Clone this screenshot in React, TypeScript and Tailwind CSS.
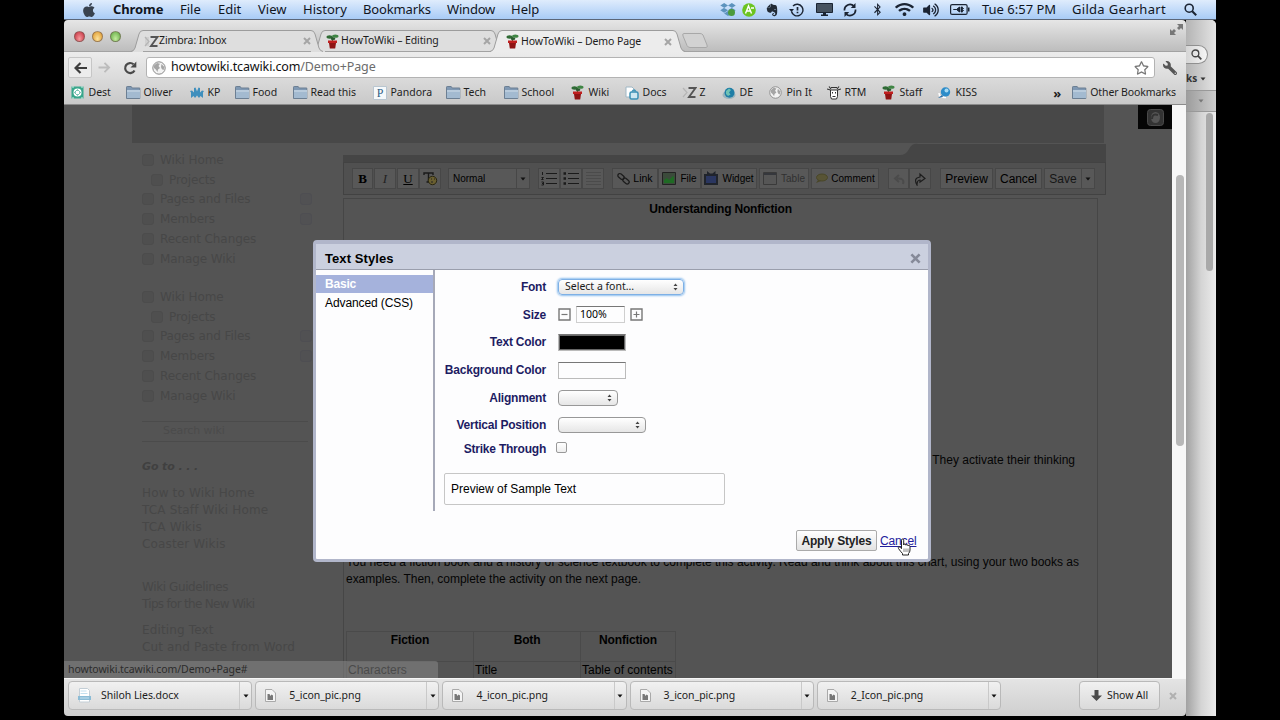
import React from "react";
import {
  FaApple,
  FaBluetoothB,
  FaDropbox,
  FaEvernote,
  FaRegStar,
  FaVolumeUp,
  FaWifi,
  FaWrench,
} from "react-icons/fa";
import { clsx } from "clsx";

const UI_FONT = "font-['Noto_Sans',sans-serif]";
const PAGE_FONT = "font-['Liberation_Sans',sans-serif]";

/* ---------- icons ---------- */

const FolderIcon = () => (
  <svg width="15" height="13" viewBox="0 0 15 13">
    <path d="M.5 2V1.2Q.5.5 1.2.5h4l1 1.5h7.6v10.5H.5z" fill="#7f98b3" stroke="#6c7f93" />
    <path d="M1 4h13v8H1z" fill="#a3bad0" />
    <path d="M1 4h13v2H1z" fill="#b9cbdc" />
  </svg>
);

const PlantIcon = () => (
  <svg width="13" height="15" viewBox="0 0 13 15">
    <path d="M6.5 8V3" stroke="#3d6b2c" strokeWidth="1.2" />
    <ellipse cx="3.5" cy="3" rx="3" ry="1.7" fill="#2f6b35" />
    <ellipse cx="9.3" cy="2.2" rx="3.2" ry="1.6" fill="#3f8544" />
    <ellipse cx="7" cy="4.8" rx="2.4" ry="1.2" fill="#2b5a30" />
    <path d="M2 6.5h9V9H2z" fill="#c01f1f" />
    <path d="M3 9h7l-.8 5.5H3.800z" fill="#8f1414" />
  </svg>
);

const ZIcon = () => (
  <svg width="15" height="13" viewBox="0 0 15 13">
    <path d="M1 2h4v9H1z" fill="#d0d0d0" />
    <path d="M1 2l4 4.500-4 4.500" fill="none" stroke="#b5b5b5" strokeWidth="1.200" />
    <path d="M6.500 2h7L7 11h6.500" fill="none" stroke="#555" strokeWidth="1.900" />
  </svg>
);

const GlobeIcon = ({ size = 14 }: { size?: number }) => (
  <svg width={size} height={size} viewBox="0 0 14 14">
    <circle cx="7" cy="7" r="6.200" fill="#f3f3f3" stroke="#8a8a8a" />
    <path d="M2 4.500L5 2l3 .800L6.500 5 8 7 6 8.500 5.500 11 3.800 8.500 2 7z" fill="#a5a5a5" />
    <path d="M9.500 3l2.800 3-.8 3.200L9.800 8 9 6z" fill="#a5a5a5" />
  </svg>
);

const DestIcon = () => (
  <svg width="13" height="13" viewBox="0 0 13 13">
    <path d="M.5.500h12v12H.5z" fill="#39a78c" />
    <circle cx="6.500" cy="6.500" r="4" fill="#fff" />
    <path d="M6.500 3.200l3.300 3.300-3.300 3.300-3.300-3.300z" fill="#2a9d84" />
    <circle cx="6.500" cy="6.500" r="2" fill="#fff" />
    <path d="M1 1h2M10 1h2M1 12h2M10 12h2" stroke="#c9efe5" />
  </svg>
);

const KpIcon = () => (
  <svg width="14" height="13" viewBox="0 0 14 13">
    <path d="M1 12V6.500L0 5l2-.500 2 2V2l1.500-.500L7 5.500 8.500 1.500 10 2v4.500l2-2 2 .500-1 1.500V12l-2.500-2L9 12 7 9.500 5 12l-1.500-2z" fill="#3f8fbd" />
  </svg>
);

const PandoraIcon = () => (
  <svg width="14" height="14" viewBox="0 0 14 14">
    <path d="M.5.500h13v13H.5z" fill="#f6f9fb" stroke="#b9c6d0" />
    <text x="7" y="11" textAnchor="middle" fontSize="12" fontFamily="Liberation Serif" fill="#2f5f86">P</text>
  </svg>
);

const DocsIcon = () => (
  <svg width="14" height="14" viewBox="0 0 14 14">
    <path d="M1 1h6l2 2v8H1z" fill="#fff" stroke="#9fb7c5" />
    <rect x="5" y="6" width="8" height="7" rx="1.500" fill="#cde7f1" stroke="#3a90b5" strokeWidth="1.500" />
    <path d="M7 5.500Q9 2.500 11 5.500" fill="none" stroke="#3a90b5" strokeWidth="1.300" />
  </svg>
);

const EarthIcon = () => (
  <svg width="14" height="14" viewBox="0 0 14 14">
    <ellipse cx="7" cy="9" rx="6.500" ry="4" fill="#9bb4bd" />
    <circle cx="7.500" cy="6.800" r="5" fill="#1f7ea6" />
    <path d="M4 5l3-2.500 2 1.500-2 2.500 1.500 2L6 10 4 8z" fill="#6fc2b4" />
  </svg>
);

const CowIcon = () => (
  <svg width="14" height="15" viewBox="0 0 14 15">
    <path d="M3.500 5h7v6.500l-1 2.500h-5l-1-2.500z" fill="#fff" stroke="#333" />
    <path d="M0 4l3.500 1M14 4l-3.500 1M2 1.500l2 2.500M12 1.500L10 4M4 2.500h6" stroke="#333" strokeWidth="1.200" />
    <path d="M5.500 7v1.500M8.500 7v1.500M5.500 11.500h3" stroke="#333" />
  </svg>
);

const KissIcon = () => (
  <svg width="13" height="13" viewBox="0 0 13 13">
    <circle cx="7.500" cy="6" r="4.700" fill="#2d8cc9" />
    <circle cx="8.500" cy="4.500" r="2" fill="#a6daf3" />
    <path d="M1 7q0 5 7 4.500" fill="none" stroke="#fff" strokeWidth="1.500" />
    <path d="M0 12l4-3 1 2z" fill="#2a6fa8" />
  </svg>
);

const MagnifierIcon = ({ size = 13, color = "#1b2433" }: { size?: number; color?: string }) => (
  <svg width={size} height={size} viewBox="0 0 13 13" fill="none" stroke={color}>
    <circle cx="5.200" cy="5.200" r="4" strokeWidth="1.600" />
    <path d="M8.200 8.200l4 4" strokeWidth="2" />
  </svg>
);

const CloseIcon = ({ size = 8, color = "#a5a5a5", stroke = 2 }: { size?: number; color?: string; stroke?: number }) => (
  <svg width={size} height={size} viewBox="0 0 8 8" stroke={color} strokeWidth={stroke}>
    <path d="M1 1l6 6M7 1L1 7" />
  </svg>
);

const Caret = ({ color = "#111" }: { color?: string }) => (
  <svg width="6" height="4" viewBox="0 0 6 4">
    <path d="M.5.500h5L3 3.500z" fill={color} />
  </svg>
);

const UpDown = () => (
  <svg width="5" height="8" viewBox="0 0 5 8" fill="#444">
    <path d="M2.500.500L4.500 3h-4zM2.500 7.500L.5 5h4z" />
  </svg>
);

/* ---------- mac menu bar ---------- */

const menus = [
  { label: "Chrome", className: "w-[67px] font-bold tracking-[-0.1px]" },
  { label: "File", className: "w-[38px]" },
  { label: "Edit", className: "w-[40px]" },
  { label: "View", className: "w-[45px]" },
  { label: "History", className: "w-[60px]" },
  { label: "Bookmarks", className: "w-[84px] tracking-[-0.150px]" },
  { label: "Window", className: "w-[64px] tracking-[-0.200px]" },
  { label: "Help", className: "w-[50px]" },
];

const MenuBar = () => (
  <div
    className={clsx(
      "flex h-[20px] shrink-0 items-center border-b border-[#5b6678] bg-linear-to-b from-[#dfecfc] to-[#a8cbf6] pl-[18px] text-[13px] text-[#10151e]",
      UI_FONT
    )}
  >
    <span className="w-[31px]">
      <FaApple className="h-[16px] w-[14px] text-[#38424f]" />
    </span>
    {menus.map((m) => (
      <span key={m.label} className={clsx("shrink-0 whitespace-nowrap", m.className)}>
        {m.label}
      </span>
    ))}
    <div className="ml-auto flex items-center">
      <span className="relative w-[22px]">
        <FaDropbox className="h-[15px] w-[16px] text-[#5d93bd]" />
        <span className="absolute top-[7px] left-[8px] size-[7px] rounded-full bg-[#4c9b3d]" />
      </span>
      <span className="w-[23px]">
        <svg width="14" height="14" viewBox="0 0 14 14">
          <circle cx="7" cy="7" r="6.800" fill="#6cc421" />
          <path d="M3.500 10.500L6.500 3l3 7.500M4.500 8h4M9 5h3" stroke="#fff" strokeWidth="1.400" fill="none" />
        </svg>
      </span>
      <span className="w-[24px]">
        <FaEvernote className="h-[14px] w-[14px] text-[#222b36]" />
      </span>
      <span className="w-[27px]">
        <svg width="15" height="14" viewBox="0 0 15 14" fill="none" stroke="#1b2433" strokeWidth="1.400">
          <path d="M2.500 8.500A5.800 5.800 0 1 0 4 3" />
          <path d="M8.500 4v3.500M8.500 8.800v1.400" strokeWidth="1.700" />
          <path d="M0 6h5L2.500 9z" fill="#1b2433" stroke="none" />
        </svg>
      </span>
      <span className="w-[27px]">
        <svg width="17" height="13" viewBox="0 0 17 13">
          <path d="M.5.500h16v9H.5z" fill="#46525f" stroke="#1b2433" />
          <path d="M7 10h3v1.500h2V13H5v-1.500h2z" fill="#1b2433" />
        </svg>
      </span>
      <span className="w-[30px]">
        <svg width="14" height="14" viewBox="0 0 14 14" fill="none" stroke="#1b2433" strokeWidth="1.700">
          <path d="M1.500 7.500A5.500 5.500 0 0 1 11 3.200M12.500 6.500A5.500 5.500 0 0 1 3 10.800" />
          <path d="M12.500 0v5H7.800zM1.500 14V9h4.700z" fill="#1b2433" stroke="none" />
        </svg>
      </span>
      <span className="w-[22px]">
        <FaBluetoothB className="h-[13px] w-[9px] text-[#1b2433]" />
      </span>
      <span className="w-[28px]">
        <FaWifi className="h-[15px] w-[19px] text-[#1b2433]" />
      </span>
      <span className="w-[27px]">
        <FaVolumeUp className="h-[14px] w-[16px] text-[#1b2433]" />
      </span>
      <span className="w-[32px]">
        <svg width="20" height="11" viewBox="0 0 20 11">
          <rect x=".6" y=".6" width="16.500" height="9.800" rx="1.500" fill="none" stroke="#1b2433" strokeWidth="1.200" />
          <path d="M18 3.500h1.500v4H18z" fill="#1b2433" />
          <path d="M3.500 5.500h3l3-2.500v5l-3-2.500z" fill="#1b2433" stroke="#1b2433" />
          <path d="M11 3h1.500v5H11zM12.500 4.500H14M12.500 6.500H14" fill="#1b2433" stroke="#1b2433" strokeWidth=".8" />
        </svg>
      </span>
      <span className="w-[90px] whitespace-nowrap">Tue 6:57 PM</span>
      <span className="w-[112px] tracking-[0.300px] whitespace-nowrap">Gilda Gearhart</span>
      <span className="w-[32px]">
        <MagnifierIcon />
      </span>
    </div>
  </div>
);

/* ---------- chrome window ---------- */

type TabProps = {
  icon: React.ReactNode;
  title: string;
  className: string;
  bodyClass?: string;
  active?: boolean;
};

const Tab = ({ icon, title, className, bodyClass, active }: TabProps) => {
  const fill = active ? "#ececec" : "#dedede";
  return (
    <div className={clsx("relative flex shrink-0", active ? "h-[22px]" : "h-[21px]", className)}>
      <svg width="12" height="22" viewBox="0 0 12 22" className="shrink-0">
        <path d="M0 22Q3 21 4 18L8 4Q9 .500 12 .500V22z" fill={fill} />
        <path d="M0 21.500Q3 21 4 18L8 4Q9 .500 12 .500" fill="none" stroke="#9c9c9c" />
      </svg>
      <div
        className={clsx(
          "flex min-w-0 flex-1 items-center border-t border-[#9c9c9c]",
          active ? "bg-[#ececec]" : "bg-[#dedede]",
          bodyClass
        )}
      >
        <span className="flex w-[15px] shrink-0">{icon}</span>
        <span className="flex-1 text-[10.500px] tracking-[-0.100px] whitespace-nowrap text-[#1c1c1c]">{title}</span>
        <CloseIcon />
      </div>
      <svg width="12" height="22" viewBox="0 0 12 22" className="shrink-0">
        <path d="M12 22Q9 21 8 18L4 4Q3 .500 0 .500V22z" fill={fill} />
        <path d="M12 21.500Q9 21 8 18L4 4Q3 .500 0 .500" fill="none" stroke="#9c9c9c" />
      </svg>
    </div>
  );
};

const Light = ({ className }: { className: string }) => (
  <span className={clsx("mr-[7px] size-[11px] rounded-full border border-[#6e5a52]/60", className)} />
);

const TabStrip = () => (
  <div
    className={clsx(
      "flex h-[32px] shrink-0 items-start border-b border-[#a2a2a2] bg-linear-to-b from-[#e6e6e6] to-[#bdbdbd] pl-[10px]",
      UI_FONT
    )}
  >
    <div className="flex w-[57px] pt-[11px]">
      <Light className="bg-radial-[at_50%_75%] from-[#f79a9c] to-[#c22b3c]" />
      <Light className="bg-radial-[at_50%_75%] from-[#fde29a] to-[#dd9526]" />
      <Light className="bg-radial-[at_50%_75%] from-[#c3ec9d] to-[#5da83f]" />
    </div>
    <div className="flex pt-[10px]">
      <Tab icon={<ZIcon />} title="Zimbra: Inbox" className="z-10 w-[192px]" bodyClass="pl-[1px]" />
      <Tab icon={<PlantIcon />} title="HowToWiki – Editing" className="-ml-[10px] w-[190px]" bodyClass="pl-[1px]" />
      <Tab icon={<PlantIcon />} title="HowToWiki – Demo Page" className="z-10 -ml-[13px] w-[195px]" bodyClass="pl-[4px] pr-[1px]" active />
    </div>
    <svg width="26" height="16" viewBox="0 0 26 16" className="mt-[13px] -ml-[3px]">
      <path d="M2 .500h16Q20 .500 21 2l4 10q1 2.500-1 2.500H8q-2 0-3-2L1 3Q0 .500 2 .500z" fill="#d2d2d2" stroke="#a8a8a8" />
    </svg>
    <svg width="13" height="13" viewBox="0 0 13 13" className="mt-[3px] mr-[3px] ml-auto" fill="#777">
      <path d="M7 1h6v6l-2-2-2 2-2-2 2-2zM0 6l2 2 2-2 2 2-2 2 2 2H0z" />
    </svg>
  </div>
);

const Toolbar = () => (
  <div className={clsx("flex h-[28px] shrink-0 items-center bg-linear-to-b from-[#ececec] to-[#dadada] pt-[3px] pl-[4px]", UI_FONT)}>
    <div className="flex h-[21px] w-[24px] items-center justify-center rounded-[2px] border border-[#c6c6c6] bg-[#ececec]">
      <svg width="13" height="12" viewBox="0 0 13 12" fill="none" stroke="#3e3e3e" strokeWidth="2.200">
        <path d="M6.500 1L1.500 6l5 5M2 6h11" />
      </svg>
    </div>
    <svg width="13" height="11" viewBox="0 0 13 12" fill="none" stroke="#bcbcbc" strokeWidth="2" className="ml-[6px]">
      <path d="M6.500 1l5 5-5 5M11 6H0" />
    </svg>
    <svg width="14" height="14" viewBox="0 0 14 14" fill="none" stroke="#4a4a4a" strokeWidth="2.200" className="ml-[12px]">
      <path d="M11.500 9.500A5 5 0 1 1 10.500 3.300" />
      <path d="M13.300.500v6H7.500z" fill="#4a4a4a" stroke="none" />
    </svg>
    <div className="ml-[9px] flex h-[21px] w-[1009px] items-center rounded-[3px] border border-[#b3b3b3] bg-white pr-[5px] pl-[5px]">
      <GlobeIcon />
      <span className="ml-[5px] text-[12.500px] tracking-[-0.130px] whitespace-nowrap text-[#6c6c6c]">
        <span className="text-[#111]">howtowiki.tcawiki.com</span>/Demo+Page
      </span>
      <FaRegStar className="ml-auto h-[14px] w-[15px] text-[#777]" />
    </div>
    <FaWrench className="ml-[8px] size-[14px] -scale-x-100 text-[#565656]" />
  </div>
);

const bookmarks = [
  { label: "Dest", icon: <DestIcon />, className: "w-[55px]" },
  { label: "Oliver", icon: <FolderIcon />, className: "w-[64px]" },
  { label: "KP", icon: <KpIcon />, className: "w-[45px]" },
  { label: "Food", icon: <FolderIcon />, className: "w-[58px]" },
  { label: "Read this", icon: <FolderIcon />, className: "w-[80px]" },
  { label: "Pandora", icon: <PandoraIcon />, className: "w-[73px]" },
  { label: "Tech", icon: <FolderIcon />, className: "w-[58px]" },
  { label: "School", icon: <FolderIcon />, className: "w-[67px]" },
  { label: "Wiki", icon: <PlantIcon />, className: "w-[54px]" },
  { label: "Docs", icon: <DocsIcon />, className: "w-[57px]" },
  { label: "Z", icon: <ZIcon />, className: "w-[40px]" },
  { label: "DE", icon: <EarthIcon />, className: "w-[47px]" },
  { label: "Pin It", icon: <GlobeIcon size={13} />, className: "w-[58px]" },
  { label: "RTM", icon: <CowIcon />, className: "w-[55px]" },
  { label: "Staff", icon: <PlantIcon />, className: "w-[56px]" },
  { label: "KISS", icon: <KissIcon />, className: "w-[60px]" },
];

const BookmarksBar = () => (
  <div
    className={clsx(
      "flex h-[25px] shrink-0 items-center border-b border-[#8b8b8b] bg-linear-to-b from-[#d9d9d9] to-[#c9c9c9] pt-[1px] pl-[7px] text-[10.500px] text-[#1e1e1e]",
      UI_FONT
    )}
  >
    {bookmarks.map((b) => (
      <div key={b.label} className={clsx("flex shrink-0 items-center whitespace-nowrap", b.className)}>
        <span className="flex w-[17.500px] shrink-0">{b.icon}</span>
        {b.label}
      </div>
    ))}
    <div className="ml-auto flex items-center pr-[10px] tracking-[-0.100px] whitespace-nowrap">
      <span className="w-[19px] text-[13px] leading-[14px] font-bold">»</span>
      <span className="flex w-[18px]">
        <FolderIcon />
      </span>
      Other Bookmarks
    </div>
  </div>
);

/* ---------- dimmed wiki page ---------- */

const wikiLinks = [
  { label: "Wiki Home", className: "" },
  { label: "Projects", className: "pl-[9px]" },
  { label: "Pages and Files", className: "", badge: true },
  { label: "Members", className: "", badge: true },
  { label: "Recent Changes", className: "" },
  { label: "Manage Wiki", className: "" },
];

const WikiNav = () => (
  <div className="pr-[21px]">
    {wikiLinks.map((l) => (
      <div key={l.label} className={clsx("flex h-[19.800px] items-center", l.className)}>
        <span className="mr-[6px] size-[12px] rounded-[3px] border border-[#4c4c4c] bg-[#4f4f4f]" />
        {l.label}
        {l.badge && <span className="ml-auto size-[12px] rounded-[3px] border border-[#4e4e52] bg-[#515153]" />}
      </div>
    ))}
  </div>
);

const WikiSidebar = () => (
  <div className="w-[201px] shrink-0 pl-[10px] font-['DejaVu_Sans',sans-serif] text-[12px] tracking-[-0.1px] whitespace-nowrap text-[#474747]">
    <div className="h-[137px] pt-[7px]">
      <WikiNav />
    </div>
    <div className="pt-[7px]">
      <WikiNav />
    </div>
    <div className="mt-[15px] mr-[25px] flex h-[21px] items-center border-y border-[#4b4b4b] pl-[21px] text-[11px] text-[#4b4b4b]">
      Search wiki
    </div>
    <div className="mt-[15px] h-[20px] text-[11px] leading-[20px] font-bold text-[#404040] italic">Go to . . .</div>
    <div className="mt-[8px] leading-[17px] tracking-[0.150px]">
      <div>How to Wiki Home</div>
      <div>TCA Staff Wiki Home</div>
      <div>TCA Wikis</div>
      <div>Coaster Wikis</div>
      <div className="mt-[26px] tracking-[-0.400px]">Wiki Guidelines</div>
      <div className="tracking-[-0.700px]">Tips for the New Wiki</div>
      <div className="mt-[9px]">Editing Text</div>
      <div>Cut and Paste from Word</div>
    </div>
  </div>
);

const EditorButton = ({ className, children }: { className: string; children?: React.ReactNode }) => (
  <span
    className={clsx(
      "flex h-[21px] shrink-0 items-center justify-center border border-[#474747] bg-[#585858] whitespace-nowrap",
      className
    )}
  >
    {children}
  </span>
);

const ListIcon = ({ numbered }: { numbered?: boolean }) => (
  <svg width="16" height="15" viewBox="0 0 16 15" stroke="#1a1a1a">
    <path d="M5 2.500h11M5 7.500h11M5 12.500h11" />
    {numbered ? (
      <path d="M1.500 1v3M.5 6.500h2l-2 2h2M.5 11h2v3h-2M1 12.500h1" fill="none" />
    ) : (
      <path d="M.5 2.500h2.500M.5 7.500h2.500M.5 12.500h2.500" strokeWidth="2.400" />
    )}
  </svg>
);

const EditorToolbar = () => (
  <div className="flex h-[33px] items-center border border-[#424242] bg-[#505050] pl-[8px] text-[10px] text-black">
    <EditorButton className="w-[21px] font-['Liberation_Serif',serif] text-[13px] font-bold">B</EditorButton>
    <EditorButton className="ml-px w-[22px] font-['Liberation_Serif',serif] text-[13px] text-[#222] italic">I</EditorButton>
    <EditorButton className="ml-px w-[22px] font-['Liberation_Serif',serif] text-[13px] underline">U</EditorButton>
    <EditorButton className="w-[22px] border-[#333]">
      <svg width="15" height="15" viewBox="0 0 15 15">
        <path d="M1 4V2h9v2M5.500 2v9M3.500 11h4" fill="none" stroke="#1a1a1a" strokeWidth="1.400" />
        <circle cx="9.500" cy="9.500" r="4.200" fill="#6a5f30" stroke="#2a2712" />
        <path d="M8 8h1M11 8h1M8 11h2" stroke="#222" />
      </svg>
    </EditorButton>
    <EditorButton className="ml-[7px] w-[69px] justify-start! pl-[4px]">Normal</EditorButton>
    <EditorButton className="-ml-px w-[14px]">
      <Caret />
    </EditorButton>
    <EditorButton className="ml-[8px] w-[22px]">
      <ListIcon numbered />
    </EditorButton>
    <EditorButton className="w-[22px]">
      <ListIcon />
    </EditorButton>
    <EditorButton className="w-[22px]">
      <svg width="15" height="15" viewBox="0 0 15 15" stroke="#4b4b4b">
        <path d="M0 1.500h15M0 4.500h15M0 7.500h15M0 10.500h15M0 13.500h15" />
      </svg>
    </EditorButton>
    <EditorButton className="ml-[8px] w-[46px] gap-[2px] text-[10.500px]">
      <svg width="14" height="13" viewBox="0 0 13 13" fill="none" stroke="#1c1c1c" strokeWidth="1.300">
        <rect x="0" y="2.500" width="7" height="4" rx="2" transform="rotate(40 3.500 4.500)" />
        <rect x="5" y="7" width="7" height="4" rx="2" transform="rotate(40 8.500 9)" />
      </svg>
      Link
    </EditorButton>
    <EditorButton className="w-[43px] gap-[4px]">
      <svg width="14" height="13" viewBox="0 0 14 13">
        <path d="M.5.500h13v12H.5z" fill="#3b4a3b" stroke="#222" />
        <path d="M2 11V8l3-2 2 2 4-4 1 1v6z" fill="#1f6a24" />
      </svg>
      File
    </EditorButton>
    <EditorButton className="w-[56px] gap-[3px]">
      <svg width="15" height="15" viewBox="0 0 15 15">
        <rect x="0" y="3" width="14" height="11" fill="#20242c" />
        <rect x="2" y="5" width="10" height="7" fill="#2a3660" />
        <path d="M3 3V0l3 2.500h2.500L11.500 0v3z" fill="#20242c" />
      </svg>
      Widget
    </EditorButton>
    <EditorButton className="ml-[2px] w-[50px] gap-[4px] text-[#303030]">
      <svg width="14" height="13" viewBox="0 0 14 13">
        <path d="M.5.500h13v12H.5z" fill="#565656" stroke="#3a3a3a" />
        <path d="M1 1h12v2H1z" fill="#35373c" />
      </svg>
      Table
    </EditorButton>
    <EditorButton className="ml-[2px] w-[68px] gap-[3px]">
      <svg width="13" height="11" viewBox="0 0 13 11">
        <ellipse cx="7" cy="4.500" rx="5.500" ry="3.500" fill="#585435" stroke="#4a4729" />
        <path d="M3 7l-2 3 5-2z" fill="#4a4729" />
      </svg>
      Comment
    </EditorButton>
    <EditorButton className="ml-[9px] w-[21px]">
      <svg width="12" height="13" viewBox="0 0 12 13" fill="none" stroke="#4b4b4b" strokeWidth="2">
        <path d="M10 12q2-6-6-5.500M6 3L2 6.500 6 10" />
      </svg>
    </EditorButton>
    <EditorButton className="w-[22px]">
      <svg width="12" height="14" viewBox="0 0 12 14" fill="none" stroke="#1d1d1d" strokeWidth="1.200">
        <path d="M3 13Q-1 6 6 5V2l5 4.500L6 10V8Q3 8 3 13z" />
      </svg>
    </EditorButton>
    <EditorButton className="ml-[9px] w-[53px] text-[12px]">Preview</EditorButton>
    <EditorButton className="ml-[2px] w-[47px] text-[12px] tracking-[-0.1px]">Cancel</EditorButton>
    <EditorButton className="ml-[2px] w-[38px] text-[12px] text-[#161616]">Save</EditorButton>
    <EditorButton className="-ml-px w-[14px]">
      <Caret />
    </EditorButton>
  </div>
);

const CompareTable = () => (
  <div className="mt-[43px] ml-[2px] grid w-[330px] grid-cols-[127px_107px_95px] border-t border-l border-[#4a4a4a] text-[12px] text-black">
    {["Fiction", "Both", "Nonfiction"].map((h) => (
      <div key={h} className="h-[30px] border-r border-b border-[#4a4a4a] text-center leading-[17px] font-bold tracking-[-0.150px]">
        {h}
      </div>
    ))}
    {["Characters", "Title", "Table of contents"].map((c) => (
      <div key={c} className="h-[24px] border-r border-[#4a4a4a] pl-[1px] leading-[16px] whitespace-nowrap">
        {c}
      </div>
    ))}
  </div>
);

const Editor = () => (
  <div className="w-[763px] shrink-0">
    <div className="flex h-[12px] justify-end">
      <svg width="206" height="12" viewBox="0 0 206 12">
        <path d="M0 12Q6 12 9 6T18 1h188v11z" fill="#454545" />
      </svg>
    </div>
    <div className="h-[7px] bg-[#454545]" />
    <EditorToolbar />
    <div className="mt-[3px] h-[500px] w-[755px] border border-[#464646] text-[12px] text-[#050505]">
      <div className="h-[21px] text-center text-[12px] leading-[21px] font-bold tracking-[-0.200px] text-black">
        Understanding Nonfiction
      </div>
      <div className="mt-[230px] pr-[22px] text-right leading-[20px]">They activate their thinking</div>
      <div className="mt-[84px] pl-[2px] leading-[17px] tracking-[-0.030px] whitespace-nowrap">
        You need a fiction book and a history of science textbook to complete this activity. Read and think about this chart, using your two books as
        <br />
        examples. Then, complete the activity on the next page.
      </div>
      <CompareTable />
    </div>
  </div>
);

/* ---------- text styles dialog ---------- */

const Field = ({ label, className, children }: { label: string; className: string; children: React.ReactNode }) => (
  <div className={clsx("flex items-center", className)}>
    <span className="w-[111px] text-right font-bold tracking-[-0.220px] whitespace-nowrap text-[#1d1c63]">{label}</span>
    <div className="ml-[12px] flex items-center">{children}</div>
  </div>
);

const Select = ({ className, children }: { className: string; children?: React.ReactNode }) => (
  <div
    className={clsx(
      "flex h-[16px] items-center justify-between rounded-[4px] border bg-linear-to-b from-white to-[#e6e6e6] pr-[5px] pl-[6px] text-[10.500px] text-[#1a1a1a]",
      UI_FONT,
      className
    )}
  >
    <span>{children}</span>
    <UpDown />
  </div>
);

const StepButton = ({ plus }: { plus?: boolean }) => (
  <svg width="13" height="13" viewBox="0 0 13 13" fill="none" stroke="#777">
    <path d="M1 1h11v11H1z" strokeWidth="1.400" />
    <path d={plus ? "M3.500 6.500h6M6.500 3.500v6" : "M3.500 6.500h6"} strokeWidth="1.200" />
  </svg>
);

const HandCursor = () => (
  <svg width="15" height="18" viewBox="0 0 15 18" className="absolute top-[6px] left-[17px]">
    <path
      d="M4.500 10V2.200Q4.500 1 5.500 1t1.200 1.200V7q0-1 1-1t1.200 1.200Q9 6.500 10 6.600t1.100 1.300q.2-.6 1-.5.900.1.900 1.300V12q0 2-1.500 3.500V17h-6v-1.500Q3.500 13.500 1.500 10.500.700 9 1.800 8.700q1-.2 2.700 2z"
      fill="#fff"
      stroke="#222"
    />
    <path d="M7 10.500v3.500M9 10.500v3.500M11 10.500v3.500" stroke="#666" strokeWidth=".8" />
  </svg>
);

const TextStylesDialog = () => (
  <div
    className={clsx(
      "absolute top-[135px] left-[249px] flex h-[322px] w-[618px] flex-col rounded-[4px] border-x-3 border-t-4 border-b-3 border-[#b1b6ca] bg-[#fdfdfe] text-[12px] text-black",
      PAGE_FONT
    )}
  >
    <div className="flex h-[26px] items-center justify-between border-b border-[#9a9eac] bg-[#cbd0df] pt-[4px] pr-[7px] pl-[9px]">
      <span className="text-[13px] font-bold tracking-[0.080px]">Text Styles</span>
      <CloseIcon size={11} color="#868a99" stroke={1.9} />
    </div>
    <div className="flex h-[241px]">
      <div className="w-[119px] border-r-2 border-[#a6a9b8] pt-[5px]">
        <div className="h-[18px] bg-[#a5b2dc] pl-[9px] leading-[18px] font-bold tracking-[-0.200px] text-white">Basic</div>
        <div className="h-[20px] pl-[9px] leading-[20px] tracking-[-0.100px]">Advanced (CSS)</div>
      </div>
      <div className="flex flex-col">
        <Field label="Font" className="mt-[2px] h-[30px]">
          <Select className="w-[126px] border-[#7eb0e6] shadow-[0_0_2px_1px_#8fbfee]">Select a font...</Select>
        </Field>
        <Field label="Size" className="-mt-px h-[27px]">
          <StepButton />
          <span
            className={clsx(
              "mx-[5px] flex h-[17px] w-[49px] items-center border border-[#cfcfcf] border-t-[#777] pl-[3px] text-[10.500px]",
              UI_FONT
            )}
          >
            100%
          </span>
          <StepButton plus />
        </Field>
        <Field label="Text Color" className="h-[28px]">
          <span className="h-[17px] w-[68px] border border-[#bbb] border-t-[#777] bg-black outline-1 -outline-offset-2 outline-white/40" />
        </Field>
        <Field label="Background Color" className="h-[28px]">
          <span className="h-[17px] w-[68px] border border-[#bbb] border-t-[#777]" />
        </Field>
        <Field label="Alignment" className="h-[27px]">
          <Select className="w-[60px] border-[#989898]" />
        </Field>
        <Field label="Vertical Position" className="h-[27px]">
          <Select className="w-[88px] border-[#989898]" />
        </Field>
        <Field label="Strike Through" className="h-[21px]">
          <span className="-mt-[2px] -ml-[2px] size-[11px] rounded-[2px] border border-[#999] bg-linear-to-b from-white to-[#eee]" />
        </Field>
        <div className="mt-[14px] ml-[9px] flex h-[32px] w-[281px] items-center rounded-[2px] border border-[#c6c6c6] pl-[6px]">
          Preview of Sample Text
        </div>
      </div>
    </div>
    <div className="mt-[19px] flex h-[21px] items-center justify-end pr-[12px]">
      <span className="flex h-[21px] w-[81px] items-center justify-center rounded-[2px] border border-[#aaa] bg-linear-to-b from-white to-[#e2e2e2] font-bold tracking-[-0.150px] whitespace-nowrap text-[#222]">
        Apply Styles
      </span>
      <span className="relative ml-[3px] w-[36px] tracking-[-0.150px] text-[#22209c] underline">
        Cancel
        <HandCursor />
      </span>
    </div>
  </div>
);

/* ---------- download shelf ---------- */

const PngFileIcon = () => (
  <svg width="11" height="13" viewBox="0 0 11 13">
    <path d="M.5.500h6.500l3.500 3.500v8.500H.5z" fill="#f4f4f4" stroke="#a9a9a9" />
    <path d="M2.500 5h2l1 2 1-1.500 1.500 1V11h-5.500z" fill="#777" />
  </svg>
);

const DocFileIcon = () => (
  <svg width="15" height="15" viewBox="0 0 15 15">
    <path d="M2.500.500h8l2 2V14h-10z" fill="#fff" stroke="#c3ced6" />
    <path d="M1 8h13v4H1z" fill="#8bbcd6" />
    <path d="M3.500 3h6M3.500 5.500h7M3 10h9" stroke="#c3e0ef" />
  </svg>
);

const downloads = [
  { name: "Shiloh Lies.docx", icon: <DocFileIcon />, className: "pl-[8px]" },
  { name: "5_icon_pic.png", icon: <PngFileIcon />, className: "pl-[9px]" },
  { name: "4_icon_pic.png", icon: <PngFileIcon />, className: "pl-[9px]" },
  { name: "3_icon_pic.png", icon: <PngFileIcon />, className: "pl-[9px]" },
  { name: "2_Icon_pic.png", icon: <PngFileIcon />, className: "pl-[9px]" },
];

const DownloadShelf = () => (
  <div
    className={clsx(
      "flex h-[38px] shrink-0 items-start border-t border-[#f6f6f6] bg-linear-to-b from-[#e4e4e4] to-[#cfcfcf] pt-[2px] pl-[4px] text-[10.500px] tracking-[-0.050px] text-[#1c1c1c]",
      UI_FONT
    )}
  >
    {downloads.map((d) => (
      <div
        key={d.name}
        className="mr-[3px] flex h-[29px] w-[184.200px] shrink-0 rounded-[4px] border border-[#b9b9b9] bg-linear-to-b from-[#f1f1f1] to-[#dadada]"
      >
        <div className={clsx("flex flex-1 items-center whitespace-nowrap", d.className)}>
          <span className="flex w-[24px]">{d.icon}</span>
          {d.name}
        </div>
        <div className="flex w-[12px] items-center justify-center border-l border-[#c9c9c9]">
          <Caret />
        </div>
      </div>
    ))}
    <div className="mr-[9px] ml-auto flex h-[29px] w-[81px] items-center justify-center gap-[5px] rounded-[4px] border border-[#b9b9b9] bg-linear-to-b from-[#f1f1f1] to-[#dadada] whitespace-nowrap">
      <svg width="11" height="11" viewBox="0 0 11 11" fill="#4b4b4b">
        <path d="M3.500 0h4v5.500H11L5.500 11 0 5.500h3.500z" />
      </svg>
      Show All
    </div>
    <div className="mt-[11px] mr-[9px]">
      <CloseIcon size={8} color="#b0b0b0" />
    </div>
  </div>
);

/* ---------- window behind ---------- */

const BackWindow = () => (
  <div className={clsx("flex w-[30px] shrink-0 flex-col overflow-hidden rounded-tr-[5px] bg-[#e3e3e3]", UI_FONT)}>
    <div className="h-[71px] border-b border-[#999] bg-linear-to-r from-[#b4b4b4] to-[#e4e4e4]">
      <div className="mt-[25px] flex h-[19px] w-[22px] items-center rounded-r-full border border-l-0 border-[#909090] bg-linear-to-r from-[#d5d5d5] to-[#f6f6f6] pl-[5px]">
        <MagnifierIcon size={11} color="#444" />
      </div>
      <div className="mt-[6px] flex items-center gap-[3px] text-[10px] leading-[17px] font-bold text-[#333]">
        <span>ks</span>
        <Caret color="#333" />
      </div>
    </div>
    <div className="flex h-[21px] items-center justify-center border-b border-[#999] bg-linear-to-r from-[#9c9c9c] to-[#cdcdcd]">
      <Caret color="#777" />
    </div>
    <div className="flex flex-1 bg-linear-to-r from-[#a2a2a2] via-[#d4d4d4] via-50% to-[#ececec]">
      <div className="mt-[1px] ml-[20px] h-[158px] w-[7px] rounded-full bg-[#a9a9a9]" />
    </div>
  </div>
);

export default function App() {
  return (
    <div className="flex h-[720px] w-[1280px] justify-center overflow-hidden bg-black">
      <div className="flex h-[716px] w-[1152px] flex-col">
        <MenuBar />
        <div className="flex h-[696px]">
          <div className="flex w-[1122px] shrink-0 flex-col overflow-hidden rounded-t-[4px] rounded-b-[4px]">
            <TabStrip />
            <Toolbar />
            <BookmarksBar />
            <div className="relative flex h-[573px] shrink-0 overflow-hidden">
              <div className={clsx("w-[1108px] shrink-0 bg-[#545454]", PAGE_FONT)}>
                <div className="flex h-[38px] justify-between pl-[68px]">
                  <div className="w-[972px] bg-[#484848]" />
                  <div className="flex h-[24px] w-[34px] items-center justify-center bg-[#060606]">
                    <svg width="17" height="17" viewBox="0 0 17 17">
                      <rect x=".5" y=".5" width="16" height="16" rx="3" fill="#333" stroke="#4a4a4a" />
                      <ellipse cx="8.500" cy="8.500" rx="4.500" ry="5.500" fill="#555" />
                      <path d="M5 10q0-6 6-4" stroke="#333" strokeWidth="2" fill="none" />
                    </svg>
                  </div>
                </div>
                <div className="flex pl-[68px]">
                  <WikiSidebar />
                  <div className="ml-[10px]">
                    <Editor />
                  </div>
                </div>
              </div>
              <div className="w-[14px] bg-[#f7f7f7] pt-[70px] pl-[4px]">
                <div className="h-[271px] w-[8px] rounded-full bg-[#b7b7b7]" />
              </div>
              <div
                className={clsx(
                  "absolute bottom-0 left-0 h-[17px] w-[374px] rounded-tr-[3px] bg-[#868686]/55 pl-[4px] text-[10.500px] tracking-[-0.080px] leading-[16px] text-[#2c2c2c]",
                  UI_FONT
                )}
              >
                howtowiki.tcawiki.com/Demo+Page#
              </div>
              <TextStylesDialog />
            </div>
            <DownloadShelf />
          </div>
          <BackWindow />
        </div>
      </div>
    </div>
  );
}
